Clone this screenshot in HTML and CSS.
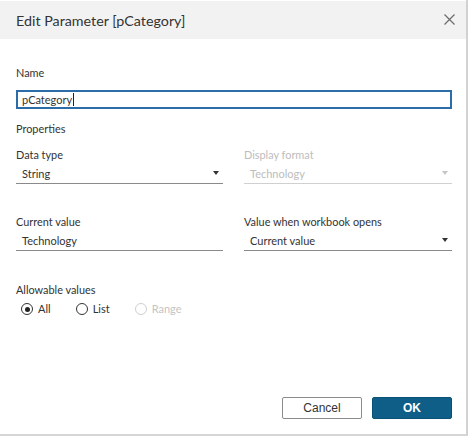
FILE: index.html
```html
<!DOCTYPE html>
<html>
<head>
<meta charset="utf-8">
<link rel="stylesheet" href="styles.css">
</head>
<body>
<div class="dialog">
  <div class="header">
    <span class="title">Edit Parameter [pCategory]</span>
    <svg class="close" width="11" height="11" viewBox="0 0 11 11"><path d="M0.5 0.5 L10.5 10.5 M10.5 0.5 L0.5 10.5" stroke="#6b6b6b" stroke-width="1.2" fill="none"/></svg>
  </div>
  <div class="body">
    <div class="label name-label">Name</div>
    <div class="input"><span>pCategory</span><span class="caret"></span></div>
    <div class="label props">Properties</div>
    <div class="grid">
      <div class="col">
        <div class="label">Data type</div>
        <div class="field"><span>String</span><span class="arrow"></span></div>
      </div>
      <div class="col disabled">
        <div class="label">Display format</div>
        <div class="field"><span>Technology</span><span class="arrow"></span></div>
      </div>
      <div class="col row2">
        <div class="label">Current value</div>
        <div class="field"><span>Technology</span></div>
      </div>
      <div class="col row2">
        <div class="label">Value when workbook opens</div>
        <div class="field"><span>Current value</span><span class="arrow"></span></div>
      </div>
    </div>
    <div class="label allow">Allowable values</div>
    <div class="radios">
      <div class="radio checked"><span class="circle"></span>All</div>
      <div class="radio"><span class="circle"></span>List</div>
      <div class="radio disabled"><span class="circle"></span>Range</div>
    </div>
    <div class="footer">
      <button class="btn cancel">Cancel</button>
      <button class="btn ok">OK</button>
    </div>
  </div>
</div>
</body>
</html>
```

FILE: styles.css
```css
html, body {
  margin: 0;
  padding: 0;
  background: #ffffff;
}
body {
  font-family: Lato, "Noto Sans", sans-serif;
  color: #333333;
}
.dialog {
  width: 468px;
  height: 436px;
  box-sizing: border-box;
  border-right: 2px solid #d2d2d2;
  border-bottom: 2px solid #d6d6d6;
  display: flex;
  flex-direction: column;
  background: #fff;
}
.header {
  height: 38px;
  flex: none;
  margin-top: 1px;
  background: #f2f2f2;
  display: flex;
  align-items: center;
  justify-content: space-between;
  padding: 0 11px 0 16px;
}
.title {
  font-size: 14.3px;
  color: #333;
}
.close {
  display: block;
  margin-top: -1px;
}
.body {
  flex: 1;
  display: flex;
  flex-direction: column;
  padding: 0 14px 15px 16px;
}
.label {
  font-size: 10.9px;
  line-height: 16px;
  color: #333;
}
.name-label { margin-top: 26px; }
.input {
  margin-top: 9px;
  height: 19px;
  box-sizing: border-box;
  border: 2px solid #2c6ca8;
  display: flex;
  align-items: center;
  padding-left: 4px;
  font-size: 11px;
}
.caret {
  display: inline-block;
  width: 1px;
  height: 13px;
  background: #222;
  margin-left: 1px;
}
.props { margin-top: 12px; }
.grid {
  margin-top: 10px;
  display: grid;
  grid-template-columns: 207px 208px;
  column-gap: 21px;
}
.row2 { margin-top: 30px; }
.field {
  margin-top: 1px;
  height: 20px;
  box-sizing: border-box;
  border-bottom: 1px solid #8a8a8a;
  display: flex;
  align-items: center;
  justify-content: space-between;
  padding: 0 4px 1px 6px;
  font-size: 11px;
}
.arrow {
  width: 0;
  height: 0;
  border-left: 3.5px solid transparent;
  border-right: 3.5px solid transparent;
  border-top: 4px solid #333;
}
.disabled .label, .disabled .field { color: #bdbdbd; }
.disabled .field { border-bottom-color: #d0d0d0; }
.disabled .arrow { border-top-color: #c6c6c6; }
.allow { margin-top: 31px; }
.radios {
  margin-top: 3px;
  display: flex;
  gap: 25px;
  padding-left: 5px;
  font-size: 11px;
  line-height: 16px;
}
.radio {
  display: flex;
  align-items: center;
  gap: 5px;
}
.circle {
  width: 12px;
  height: 12px;
  box-sizing: border-box;
  border: 1px solid #333;
  border-radius: 50%;
  position: relative;
}
.checked .circle::after {
  content: "";
  position: absolute;
  left: 2.5px;
  top: 2.5px;
  width: 5px;
  height: 5px;
  border-radius: 50%;
  background: #222;
}
.radio.disabled { color: #c4c4c4; }
.radio.disabled .circle { border-color: #cfcfcf; }
.footer {
  margin-top: auto;
  display: flex;
  justify-content: flex-end;
  gap: 10px;
}
.btn {
  width: 80px;
  height: 22px;
  font-family: "Liberation Sans", Arial, sans-serif;
  font-size: 12px;
  border-radius: 2px;
  padding: 0;
}
.cancel {
  background: #fff;
  border: 1px solid #8c8c8c;
  color: #333;
}
.ok {
  background: #0e5e88;
  border: 1px solid #0b5279;
  color: #fff;
  font-weight: bold;
}
```
